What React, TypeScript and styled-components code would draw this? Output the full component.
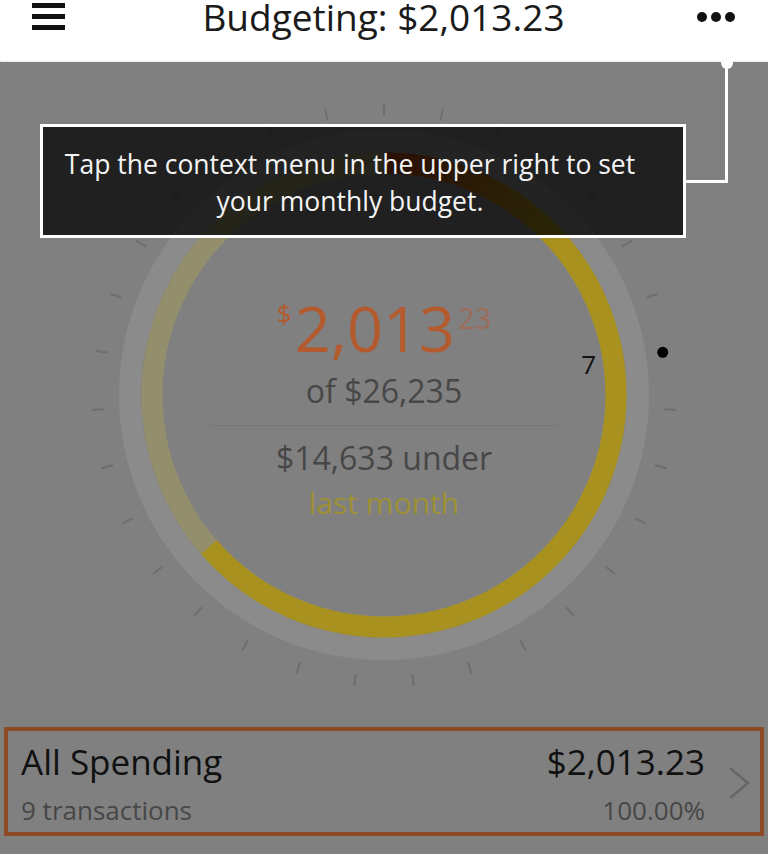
import styled, { createGlobalStyle } from "styled-components";

const GlobalStyle = createGlobalStyle`
  html, body {
    margin: 0;
    padding: 0;
    background: #808080;
  }
  body {
    font-family: "Open Sans", "DejaVu Sans", sans-serif;
  }
`;

const Screen = styled.div`
  position: relative;
  width: 768px;
  height: 854px;
  overflow: hidden;
  background: #808080;
`;

const Header = styled.header`
  height: 62px;
  box-sizing: border-box;
  background: #fff;
  border-bottom: 1px dotted #dcdcdc;
  display: grid;
  grid-template-columns: 1fr auto 1fr;
  align-items: start;
  padding: 0 33px 0 32px;
`;

const MenuButton = styled.div`
  justify-self: start;
  display: flex;
  flex-direction: column;
  gap: 6px;
  padding-top: 3px;
`;

const Bar = styled.span`
  display: block;
  width: 33px;
  height: 5px;
  background: #111;
`;

const Title = styled.h1`
  margin: 0;
  font-size: 37px;
  line-height: 34px;
  font-weight: 400;
  color: #1a1a1a;
  white-space: nowrap;
`;

const MoreButton = styled.div`
  justify-self: end;
  display: flex;
  gap: 4px;
  margin-top: 12px;
`;

const Dot = styled.span`
  width: 10px;
  height: 10px;
  border-radius: 50%;
  background: #111;
`;

const Gauge = styled.section`
  height: 665px;
  display: grid;
  & > * {
    grid-area: 1 / 1;
  }
`;

const Readout = styled.div`
  justify-self: center;
  align-self: start;
  padding-top: 235px;
  display: flex;
  flex-direction: column;
  align-items: center;
  text-align: center;
`;

const Amount = styled.div`
  display: flex;
  align-items: flex-start;
  color: #b35a2e;
`;

const Dollar = styled.span`
  font-size: 26px;
  line-height: 26px;
  margin: 3px 3px 0 0;
`;

const Whole = styled.span`
  font-size: 63px;
  line-height: 62px;
`;

const Cents = styled.span`
  font-size: 29px;
  line-height: 29px;
  margin: 6px 0 0 3px;
  color: #9c6c58;
`;

const Line = styled.div<{ $tone?: "muted" | "accent" }>`
  font-size: ${p => (p.$tone === "accent" ? "30px" : "32px")};
  line-height: 40px;
  color: ${p => (p.$tone === "accent" ? "#9e9035" : "#474747")};
  margin-top: ${p => (p.$tone === "accent" ? "5px" : "12px")};
`;

const Divider = styled.div`
  width: 350px;
  height: 1px;
  margin-top: 14px;
  background: #777;
`;

const SpendingRow = styled.div`
  height: 109px;
  box-sizing: border-box;
  margin: 0 4px;
  border: 4px solid #8c4b24;
  padding: 9px 10px 4px 13px;
  display: flex;
  align-items: flex-start;
`;

const Column = styled.div<{ $right?: boolean }>`
  flex: ${p => (p.$right ? "none" : "1")};
  text-align: ${p => (p.$right ? "right" : "left")};
`;

const Primary = styled.div`
  font-size: 35px;
  line-height: 44px;
  color: #111;
`;

const Secondary = styled.div`
  font-size: 26px;
  line-height: 36px;
  margin-top: 8px;
  color: #474747;
`;

const Chevron = styled.svg`
  flex: none;
  margin: 26px 0 0 23px;
`;

const Tooltip = styled.div`
  position: absolute;
  left: 40px;
  top: 124px;
  width: 646px;
  height: 114px;
  box-sizing: border-box;
  border: 3px solid #fff;
  background: rgba(0, 0, 0, 0.75);
  color: #f4f4f4;
  font-size: 26.5px;
  line-height: 37px;
  text-align: center;
  padding: 19px 36px 15px 10px;
`;

const Connector = styled.div`
  position: absolute;
  left: 686px;
  top: 62px;
  width: 42px;
  height: 121px;
  box-sizing: border-box;
  border-right: 3px solid #fff;
  border-bottom: 3px solid #fff;
`;

const Knob = styled.div`
  position: absolute;
  left: 721px;
  top: 57px;
  width: 12px;
  height: 12px;
  border-radius: 50%;
  background: #fff;
`;

const CX = 384;
const CY = 333;
const DAYS = 31;

function polar(r: number, deg: number): [number, number] {
  const a = (deg * Math.PI) / 180;
  return [CX + r * Math.sin(a), CY - r * Math.cos(a)];
}

function arc(r: number, a0: number, a1: number) {
  const [x0, y0] = polar(r, a0);
  const [x1, y1] = polar(r, a1);
  const large = a1 - a0 > 180 ? 1 : 0;
  return `M ${x0} ${y0} A ${r} ${r} 0 ${large} 1 ${x1} ${y1}`;
}

function mix(a: number[], b: number[], t: number) {
  const c = a.map((v, i) => Math.round(v + (b[i] - v) * t));
  return `rgb(${c[0]},${c[1]},${c[2]})`;
}

const ORANGE = [168, 62, 22];
const YELLOW = [168, 145, 31];

function BudgetRing() {
  const ticks = [];
  for (let k = 0; k < DAYS; k++) {
    if (k === 7) continue;
    const a = (k * 360) / DAYS;
    const [x0, y0] = polar(280, a);
    const [x1, y1] = polar(292, a);
    ticks.push(<line key={k} x1={x0} y1={y0} x2={x1} y2={y1} stroke="#6e6e6e" strokeWidth={2} />);
  }

  // orange -> yellow fade at the start of the spent arc
  const blend = [];
  const steps = 40;
  const span = 44;
  for (let i = 0; i < steps; i++) {
    const a0 = (i * span) / steps;
    const a1 = ((i + 1) * span) / steps + 0.4;
    blend.push(
      <path key={i} d={arc(232, a0, a1)} stroke={mix(ORANGE, YELLOW, i / (steps - 1))} strokeWidth={21} fill="none" />
    );
  }

  const today = (7 * 360) / DAYS;
  const [dx, dy] = polar(282, today);
  const [lx, ly] = polar(207, today);

  return (
    <svg width="768" height="665" viewBox="0 0 768 665">
      {ticks}
      <circle cx={CX} cy={CY} r={254} stroke="#8b8b8b" strokeWidth={22} fill="none" />
      <circle cx={CX} cy={CY} r={232} stroke="#938f6d" strokeWidth={21} fill="none" />
      <path d={arc(232, span, 229)} stroke="rgb(168,145,31)" strokeWidth={21} fill="none" />
      {blend}
      <circle cx={dx} cy={dy} r={5.5} fill="#000" />
      <text
        x={lx}
        y={ly}
        textAnchor="middle"
        dominantBaseline="central"
        fontSize="26"
        fontFamily="Open Sans, sans-serif"
        fill="#111"
      >
        7
      </text>
    </svg>
  );
}

export default function App() {
  return (
    <>
      <GlobalStyle />
      <Screen>
        <Header>
          <MenuButton>
            <Bar />
            <Bar />
            <Bar />
          </MenuButton>
          <Title>Budgeting: $2,013.23</Title>
          <MoreButton>
            <Dot />
            <Dot />
            <Dot />
          </MoreButton>
        </Header>

        <Gauge>
          <BudgetRing />
          <Readout>
            <Amount>
              <Dollar>$</Dollar>
              <Whole>2,013</Whole>
              <Cents>23</Cents>
            </Amount>
            <Line>of $26,235</Line>
            <Divider />
            <Line>$14,633 under</Line>
            <Line $tone="accent">last month</Line>
          </Readout>
        </Gauge>

        <SpendingRow>
          <Column>
            <Primary>All Spending</Primary>
            <Secondary>9 transactions</Secondary>
          </Column>
          <Column $right>
            <Primary>$2,013.23</Primary>
            <Secondary>100.00%</Secondary>
          </Column>
          <Chevron width="22" height="34" viewBox="0 0 22 34">
            <polyline points="2,2 20,17 2,32" fill="none" stroke="#666" strokeWidth="2.5" />
          </Chevron>
        </SpendingRow>

        <Connector />
        <Knob />
        <Tooltip>
          Tap the context menu in the upper right to set your monthly budget.
        </Tooltip>
      </Screen>
    </>
  );
}
